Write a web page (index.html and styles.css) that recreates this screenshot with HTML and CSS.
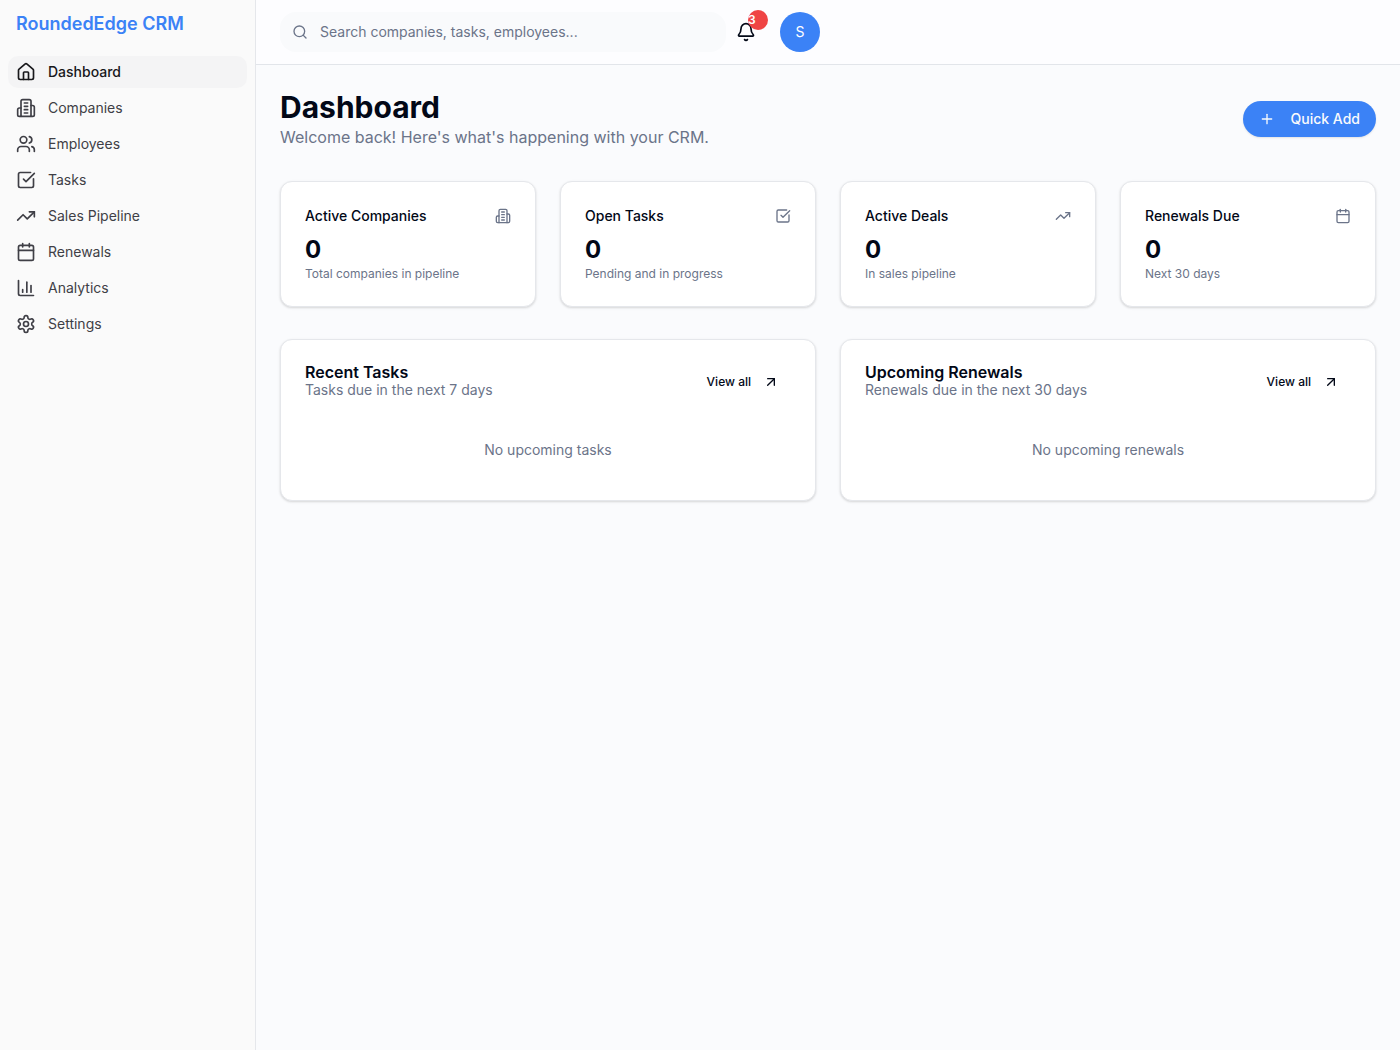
FILE: index.html
```
<!DOCTYPE html>
<html lang="en">
<head>
	<meta charset="UTF-8">
	<meta name="viewport" content="width=device-width, initial-scale=1">
	<title>RoundedEdge CRM</title>
	<link rel="stylesheet" href="styles.css">
</head>
<body>
<!-- icon set -->
<svg class="sprite" aria-hidden="true">
	<symbol id="i-home" viewBox="0 0 24 24"><path d="M15 21v-8a1 1 0 0 0-1-1h-4a1 1 0 0 0-1 1v8"/><path d="M3 10a2 2 0 0 1 .709-1.528l7-6a2 2 0 0 1 2.582 0l7 6A2 2 0 0 1 21 10v9a2 2 0 0 1-2 2H5a2 2 0 0 1-2-2z"/></symbol>
	<symbol id="i-building" viewBox="0 0 24 24"><path d="M6 22V4a2 2 0 0 1 2-2h8a2 2 0 0 1 2 2v18Z"/><path d="M6 12H4a2 2 0 0 0-2 2v6a2 2 0 0 0 2 2h2"/><path d="M18 9h2a2 2 0 0 1 2 2v9a2 2 0 0 1-2 2h-2"/><path d="M10 6h4"/><path d="M10 10h4"/><path d="M10 14h4"/><path d="M10 18h4"/></symbol>
	<symbol id="i-users" viewBox="0 0 24 24"><path d="M16 21v-2a4 4 0 0 0-4-4H6a4 4 0 0 0-4 4v2"/><circle cx="9" cy="7" r="4"/><path d="M22 21v-2a4 4 0 0 0-3-3.87"/><path d="M16 3.13a4 4 0 0 1 0 7.75"/></symbol>
	<symbol id="i-task" viewBox="0 0 24 24"><path d="M21 10.5V19a2 2 0 0 1-2 2H5a2 2 0 0 1-2-2V5a2 2 0 0 1 2-2h12.5"/><path d="m9 11 3 3L22 4"/></symbol>
	<symbol id="i-trend" viewBox="0 0 24 24"><path d="M22 7 13.5 15.5 8.5 10.5 2 17"/><path d="M16 7h6v6"/></symbol>
	<symbol id="i-calendar" viewBox="0 0 24 24"><path d="M8 2v4"/><path d="M16 2v4"/><rect width="18" height="18" x="3" y="4" rx="2"/><path d="M3 10h18"/></symbol>
	<symbol id="i-chart" viewBox="0 0 24 24"><path d="M3 3v16a2 2 0 0 0 2 2h16"/><path d="M18 17V9"/><path d="M13 17V5"/><path d="M8 17v-3"/></symbol>
	<symbol id="i-settings" viewBox="0 0 24 24"><path d="M12.22 2h-.44a2 2 0 0 0-2 2v.18a2 2 0 0 1-1 1.73l-.43.25a2 2 0 0 1-2 0l-.15-.08a2 2 0 0 0-2.73.73l-.22.38a2 2 0 0 0 .73 2.73l.15.1a2 2 0 0 1 1 1.72v.51a2 2 0 0 1-1 1.74l-.15.09a2 2 0 0 0-.73 2.73l.22.38a2 2 0 0 0 2.73.73l.15-.08a2 2 0 0 1 2 0l.43.25a2 2 0 0 1 1 1.73V20a2 2 0 0 0 2 2h.44a2 2 0 0 0 2-2v-.18a2 2 0 0 1 1-1.73l.43-.25a2 2 0 0 1 2 0l.15.08a2 2 0 0 0 2.73-.73l.22-.39a2 2 0 0 0-.73-2.73l-.15-.08a2 2 0 0 1-1-1.74v-.5a2 2 0 0 1 1-1.74l.15-.09a2 2 0 0 0 .73-2.73l-.22-.38a2 2 0 0 0-2.73-.73l-.15.08a2 2 0 0 1-2 0l-.43-.25a2 2 0 0 1-1-1.73V4a2 2 0 0 0-2-2z"/><circle cx="12" cy="12" r="3"/></symbol>
	<symbol id="i-search" viewBox="0 0 24 24"><circle cx="11" cy="11" r="8"/><path d="m21 21-4.3-4.3"/></symbol>
	<symbol id="i-bell" viewBox="0 0 24 24"><path d="M10.268 21a2 2 0 0 0 3.464 0"/><path d="M3.262 15.326A1 1 0 0 0 4 17h16a1 1 0 0 0 .74-1.673C19.41 13.956 18 12.499 18 8A6 6 0 0 0 6 8c0 4.499-1.411 5.956-2.738 7.326"/></symbol>
	<symbol id="i-plus" viewBox="0 0 24 24"><path d="M5 12h14"/><path d="M12 5v14"/></symbol>
	<symbol id="i-arrow" viewBox="0 0 24 24"><path d="M7 7h10v10"/><path d="M7 17 17 7"/></symbol>
</svg>

<div class="layout">
	<aside class="sidebar">
		<h2 class="brand">RoundedEdge CRM</h2>
		<nav>
			<ul class="menu">
				<li><a class="on" href="#"><svg class="icon"><use href="#i-home"/></svg>Dashboard</a></li>
				<li><a href="#"><svg class="icon"><use href="#i-building"/></svg>Companies</a></li>
				<li><a href="#"><svg class="icon"><use href="#i-users"/></svg>Employees</a></li>
				<li><a href="#"><svg class="icon"><use href="#i-task"/></svg>Tasks</a></li>
				<li><a href="#"><svg class="icon"><use href="#i-trend"/></svg>Sales Pipeline</a></li>
				<li><a href="#"><svg class="icon"><use href="#i-calendar"/></svg>Renewals</a></li>
				<li><a href="#"><svg class="icon"><use href="#i-chart"/></svg>Analytics</a></li>
				<li><a href="#"><svg class="icon"><use href="#i-settings"/></svg>Settings</a></li>
			</ul>
		</nav>
	</aside>

	<div class="content">
		<header class="topbar">
			<label class="search">
				<svg class="icon small" aria-hidden="true"><use href="#i-search"/></svg>
				<input type="search" aria-label="Search" placeholder="Search companies, tasks, employees...">
			</label>
			<button class="bell" type="button" aria-label="Notifications">
				<svg class="icon"><use href="#i-bell"/></svg>
				<span class="badge">3</span>
			</button>
			<button class="avatar" type="button">S</button>
		</header>

		<main class="main">
			<div class="page-head">
				<div>
					<h1>Dashboard</h1>
					<p>Welcome back! Here's what's happening with your CRM.</p>
				</div>
				<button class="quick-add" type="button"><svg class="icon small"><use href="#i-plus"/></svg>Quick Add</button>
			</div>

			<div class="stats">
				<section class="card">
					<div class="stat-head"><h3>Active Companies</h3><svg class="icon small"><use href="#i-building"/></svg></div>
					<div class="num">0</div>
					<p class="note">Total companies in pipeline</p>
				</section>
				<section class="card">
					<div class="stat-head"><h3>Open Tasks</h3><svg class="icon small"><use href="#i-task"/></svg></div>
					<div class="num">0</div>
					<p class="note">Pending and in progress</p>
				</section>
				<section class="card">
					<div class="stat-head"><h3>Active Deals</h3><svg class="icon small"><use href="#i-trend"/></svg></div>
					<div class="num">0</div>
					<p class="note">In sales pipeline</p>
				</section>
				<section class="card">
					<div class="stat-head"><h3>Renewals Due</h3><svg class="icon small"><use href="#i-calendar"/></svg></div>
					<div class="num">0</div>
					<p class="note">Next 30 days</p>
				</section>
			</div>

			<div class="panels">
				<section class="card">
					<div class="panel-head">
						<div>
							<h3>Recent Tasks</h3>
							<p>Tasks due in the next 7 days</p>
						</div>
						<a class="view-all" href="#">View all<svg class="icon small"><use href="#i-arrow"/></svg></a>
					</div>
					<p class="empty">No upcoming tasks</p>
				</section>
				<section class="card">
					<div class="panel-head">
						<div>
							<h3>Upcoming Renewals</h3>
							<p>Renewals due in the next 30 days</p>
						</div>
						<a class="view-all" href="#">View all<svg class="icon small"><use href="#i-arrow"/></svg></a>
					</div>
					<p class="empty">No upcoming renewals</p>
				</section>
			</div>
		</main>
	</div>
</div>
</body>
</html>
```
FILE: styles.css
```
*{
	margin:0;
	padding:0;
	box-sizing:border-box;
}
body{
	font-family:Inter, "Liberation Sans", sans-serif;
	font-size:14px;
	line-height:20px;
	color:#020817;
	background:#fafbfd;
}
ul{
	list-style:none;
}
a{
	color:inherit;
	text-decoration:none;
}
button,input{
	font:inherit;
	border:none;
}
button{
	cursor:pointer;
}
.sprite{
	display:none;
}
.icon{
	flex:none;
	width:20px;
	height:20px;
	fill:none;
	stroke:currentColor;
	stroke-width:2;
	stroke-linecap:round;
	stroke-linejoin:round;
}
.icon.small{
	width:16px;
	height:16px;
}
.layout{
	display:flex;
	min-height:100vh;
}

/* sidebar */
.sidebar{
	flex:none;
	width:256px;
	padding:8px;
	background:#fafafa;
	border-right:1px solid #e5e7eb;
}
.brand{
	padding:0 8px;
	margin-bottom:16px;
	font-size:18px;
	line-height:32px;
	font-weight:600;
	color:#3b82f6;
}
.menu{
	display:flex;
	flex-direction:column;
	gap:4px;
}
.menu a{
	display:flex;
	align-items:center;
	gap:12px;
	height:32px;
	padding:0 8px;
	border-radius:10px;
	color:#3f3f46;
}
.menu a.on{
	background:#f4f4f5;
	color:#18181b;
	font-weight:500;
}

/* top bar */
.content{
	flex:1;
	min-width:0;
}
.topbar{
	display:flex;
	align-items:center;
	padding:12px 24px;
	background:#fdfdff;
	border-bottom:1px solid #e2e5ea;
}
.search{
	display:flex;
	align-items:center;
	gap:12px;
	width:446px;
	height:40px;
	padding:0 12px;
	border-radius:16px;
	background:#f9fafc;
	color:#6b7489;
}
.search input{
	flex:1;
	min-width:0;
	background:none;
	outline:none;
	color:#020817;
}
.search input::placeholder{
	color:#6b7489;
	opacity:1;
}
.bell{
	position:relative;
	display:flex;
	align-items:center;
	justify-content:center;
	width:40px;
	height:40px;
	margin-right:14px;
	background:none;
	color:#020817;
}
.badge{
	position:absolute;
	top:-2px;
	right:-2px;
	width:20px;
	height:20px;
	border-radius:50%;
	background:#ef4444;
	color:#fff;
	font-size:12px;
	font-weight:600;
	text-align:left;
}
.avatar{
	width:40px;
	height:40px;
	border-radius:50%;
	background:#3b82f6;
	color:#fff;
}

/* page */
.main{
	padding:24px;
}
.page-head{
	display:flex;
	align-items:center;
	justify-content:space-between;
	margin-bottom:32px;
}
.page-head h1{
	font-size:30px;
	line-height:36px;
	font-weight:700;
}
.page-head p{
	font-size:16px;
	line-height:24px;
	color:#6b7489;
}
.quick-add{
	display:flex;
	align-items:center;
	gap:16px;
	height:36px;
	padding:0 16px;
	border-radius:18px;
	background:#3b82f6;
	color:#f8fafc;
	font-weight:500;
	box-shadow:0 1px 2px rgba(0,0,0,.1);
}
.stats,
.panels{
	display:grid;
	grid-template-columns:repeat(4,1fr);
	gap:24px;
}
.panels{
	grid-template-columns:repeat(2,1fr);
	margin-top:32px;
}
.card{
	padding:24px;
	border:1px solid #e5e7eb;
	border-radius:12px;
	background:#fff;
	box-shadow:0 1px 3px rgba(0,0,0,.1), 0 1px 2px rgba(0,0,0,.06);
}
.stat-head{
	display:flex;
	align-items:center;
	justify-content:space-between;
	margin-bottom:8px;
	color:#6b7489;
}
.stat-head h3{
	font-size:14px;
	font-weight:500;
	color:#020817;
}
.num{
	font-size:24px;
	line-height:32px;
	font-weight:700;
}
.note{
	font-size:12px;
	line-height:16px;
	color:#6b7489;
}
.panel-head{
	display:flex;
	align-items:center;
	justify-content:space-between;
	margin-bottom:24px;
}
.panel-head h3{
	font-size:16px;
	line-height:16px;
	font-weight:600;
}
.panel-head p,
.empty{
	color:#6b7489;
}
.view-all{
	display:flex;
	align-items:center;
	gap:12px;
	height:36px;
	padding:0 12px;
	font-size:12px;
	font-weight:500;
}
.empty{
	padding:16px 0;
	text-align:center;
}
```
